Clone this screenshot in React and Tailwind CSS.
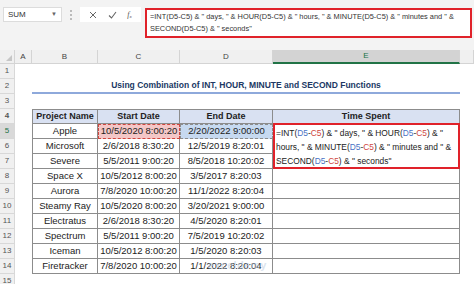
import React from "react";

const rows = [
  ["Apple", "10/5/2020 8:00:20", "2/20/2022 9:00:00"],
  ["Microsoft", "2/6/2018 8:30:20", "12/5/2019 8:20:01"],
  ["Severe", "5/5/2011 9:00:20", "8/5/2018 10:20:02"],
  ["Space X", "10/5/2012 8:00:20", "3/5/2017 8:20:03"],
  ["Aurora", "7/8/2020 10:00:20", "11/1/2022 8:20:04"],
  ["Steamy Ray", "10/5/2020 8:00:20", "3/20/2021 9:00:00"],
  ["Electratus", "2/6/2018 8:30:20", "4/5/2020 8:20:01"],
  ["Spectrum", "5/5/2011 9:00:20", "7/5/2019 10:20:02"],
  ["Iceman", "10/5/2012 8:00:20", "1/5/2020 8:20:03"],
  ["Firetracker", "7/8/2020 10:00:20", "1/1/2022 8:20:04"],
];

const D5 = () => <span className="text-[#4a72c4]">D5</span>;
const C5 = () => <span className="text-[#d0473f]">C5</span>;

function RowNum({ n, active }) {
  return (
    <div
      className={
        "w-[15px] shrink-0 h-full flex items-center justify-center border-r border-b border-[#d8d8d8] text-[8px] " +
        (active ? "bg-[#d9d9d9] text-[#217346]" : "bg-[#f0f0f0] text-[#555]")
      }>
      {n}
    </div>
  );
}

function Toolbar() {
  return (
    <div className="h-[50px] bg-[#f3f3f3] relative flex items-start pt-[7px] pl-[3px]">
      <div className="w-[59px] h-[15px] bg-white border border-[#dcdcdc] flex items-center justify-between px-[4px] text-[8px] text-[#333]">
        <span>SUM</span>
        <span className="text-[6px] text-[#666]">▼</span>
      </div>
      <div className="w-[18px] h-[15px] flex flex-col items-center justify-center gap-[2px]">
        <span className="w-[2px] h-[2px] bg-[#bbb]" />
        <span className="w-[2px] h-[2px] bg-[#bbb]" />
        <span className="w-[2px] h-[2px] bg-[#bbb]" />
      </div>
      <div className="w-[61px] h-[15px] bg-white flex items-center justify-around px-[4px] text-[#555]">
        <svg width="8" height="8" viewBox="0 0 8 8">
          <path d="M1 1 L7 7 M7 1 L1 7" stroke="#666" strokeWidth="1" />
        </svg>
        <svg width="9" height="8" viewBox="0 0 9 8">
          <path d="M1 4.5 L3.5 7 L8 1" stroke="#666" strokeWidth="1.1" fill="none" />
        </svg>
        <span className="text-[8px] italic font-['Liberation_Serif',serif] text-[#555]">
          f<sub className="text-[5px]">x</sub>
        </span>
      </div>
      <div className="ml-[4px] w-[327px] h-[30px] mt-[1px] bg-white border-2 border-[#e0222a] px-[3px] pt-[1px] text-[7.4px] leading-[12px] text-[#333] whitespace-nowrap overflow-hidden">
        <div>=INT(D5-C5) &amp; " days, " &amp; HOUR(D5-C5) &amp; " hours, " &amp; MINUTE(D5-C5) &amp; " minutes and " &amp;</div>
        <div>SECOND(D5-C5) &amp; " seconds"</div>
      </div>
    </div>
  );
}

function ColHeaders() {
  const cell =
    "h-full shrink-0 flex items-center justify-center border-r border-b border-[#d4d4d4] text-[8px] text-[#444]";
  return (
    <div className="h-[14px] flex bg-[#f0f0f0]">
      <div className={cell + " w-[15px] items-end justify-end pr-[2px] pb-[2px]"}>
        <svg width="6" height="6" viewBox="0 0 6 6">
          <path d="M6 0 L6 6 L0 6 Z" fill="#c6c6c6" />
        </svg>
      </div>
      <div className={cell + " w-[17px]"}>A</div>
      <div className={cell + " w-[66px]"}>B</div>
      <div className={cell + " w-[82px]"}>C</div>
      <div className={cell + " w-[93px]"}>D</div>
      <div className={cell + " w-[187px] bg-[#d3d3d3] border-b-2 border-b-[#217346] text-[#217346]"}>E</div>
      <div className={cell + " w-[14px]"} />
    </div>
  );
}

export default function App() {
  const tcell = "h-full shrink-0 flex items-center justify-center border-r border-b border-[#8c8c8c]";
  return (
    <div className="w-[474px] h-[284px] overflow-hidden bg-white relative font-['Liberation_Sans',Arial,sans-serif]">
      <Toolbar />
      <ColHeaders />

      {/* row 1 */}
      <div className="h-[15px] flex">
        <RowNum n={1} />
      </div>
      {/* row 2 - title */}
      <div className="h-[15px] flex">
        <RowNum n={2} />
        <div className="w-[17px] shrink-0" />
        <div className="w-[428px] shrink-0 h-full border-b-2 border-[#8ea9db] flex items-center justify-center text-[8.5px] font-bold text-[#203864]">
          Using Combination of INT, HOUR, MINUTE and SECOND Functions
        </div>
      </div>
      {/* row 3 */}
      <div className="h-[15px] flex">
        <RowNum n={3} />
      </div>
      {/* row 4 - header */}
      <div className="h-[15px] flex text-[9px] font-bold text-[#222]">
        <RowNum n={4} />
        <div className="w-[17px] shrink-0" />
        <div className={tcell + " w-[66px] border-l border-t bg-[#d9e1f2]"}>Project Name</div>
        <div className={tcell + " w-[82px] border-t bg-[#d9e1f2]"}>Start Date</div>
        <div className={tcell + " w-[93px] border-t bg-[#d9e1f2]"}>End Date</div>
        <div className={tcell + " w-[187px] border-t bg-[#d9e1f2]"}>Time Spent</div>
      </div>
      {rows.map(([name, start, end], i) => {
        const first = i === 0;
        return (
          <div key={name} className="h-[15px] flex text-[9.5px] text-[#222]">
            <RowNum n={i + 5} active={first} />
            <div className="w-[17px] shrink-0" />
            <div className={tcell + " w-[66px] border-l"}>{name}</div>
            <div
              className={
                tcell +
                " w-[82px] " +
                (first ? "bg-[#f4c7c7] border border-dashed border-[#d0473f]" : "")
              }>
              {start}
            </div>
            <div
              className={
                tcell +
                " w-[93px] " +
                (first ? "bg-[#c6d9f0] border border-dashed border-[#4a72c4]" : "")
              }>
              {end}
            </div>
            <div className={tcell + " w-[187px]"} />
          </div>
        );
      })}
      <div className="h-[15px] flex">
        <RowNum n={15} />
      </div>

      {/* in-cell editor for E5 */}
      <div className="absolute left-[273px] top-[123px] w-[187px] h-[46px] bg-white border-2 border-[#e0222a] px-[1px] pt-[1px] text-[8.4px] leading-[14px] text-[#222] whitespace-nowrap overflow-hidden">
        <div>=INT(<D5 />-<C5 />) &amp; " days, " &amp; HOUR(<D5 />-<C5 />) &amp; "</div>
        <div>hours, " &amp; MINUTE(<D5 />-<C5 />) &amp; " minutes and " &amp;</div>
        <div>SECOND(<D5 />-<C5 />) &amp; " seconds"</div>
      </div>

      {/* watermark */}
      <div className="absolute left-[208px] top-[257px] text-[11px] font-bold text-[#b8c8de]/50 tracking-wide">
        exceldemy
      </div>
    </div>
  );
}
